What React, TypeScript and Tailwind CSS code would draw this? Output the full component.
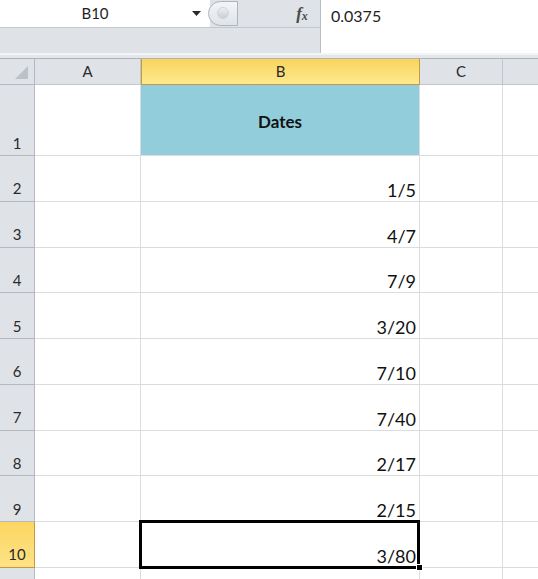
const rows = [
  { n: 2, v: '1/5' },
  { n: 3, v: '4/7' },
  { n: 4, v: '7/9' },
  { n: 5, v: '3/20' },
  { n: 6, v: '7/10' },
  { n: 7, v: '7/40' },
  { n: 8, v: '2/17' },
  { n: 9, v: '2/15' },
  { n: 10, v: '3/80' },
];

const grid = 'grid grid-cols-[35px_106px_279px_83px_1fr]';

function FormulaBar() {
  return (
    <div className="flex h-[53px] bg-[#dfe3e8]">
      <div className="flex w-[320px] flex-col">
        <div className="flex h-[28px] border-b border-[#c3c8ce]">
          <div className="relative flex w-[210px] items-center bg-white">
            <span className="w-[190px] text-center text-[15px] text-[#1e1e1e]">B10</span>
            <svg className="absolute left-[192px] top-[11px]" width="9" height="6" viewBox="0 0 9 6">
              <path d="M0 0h9L4.5 5z" fill="#2b2b2b" />
            </svg>
          </div>
          <div className="relative flex-1">
            <div className="absolute left-[-2px] top-[1px] h-[25px] w-[30px] rounded-l-full border border-[#aeb4bb] bg-gradient-to-b from-[#f4f5f7] to-[#dfe3e8]">
              <div className="ml-[8px] mt-[5px] h-[12px] w-[12px] rounded-full border border-[#d0d4d9] bg-gradient-to-b from-[#eef0f2] to-[#c9ced4]" />
            </div>
          </div>
          <div className="flex w-[40px] items-center justify-center pl-[4px] font-['Liberation_Serif',serif] text-[17px] font-bold italic text-[#4a4a4a]">
            f<span className="mt-[4px] text-[12px]">x</span>
          </div>
        </div>
        <div className="flex-1" />
      </div>
      <div className="flex-1 border-l border-[#b9bec5] bg-white pl-[10px] pt-[4px] text-[16px] text-[#1e1e1e]">
        0.0375
      </div>
    </div>
  );
}

export default function App() {
  return (
    <div className="h-[579px] w-[538px] overflow-hidden bg-white font-['Lato',sans-serif]">
      <FormulaBar />
      <div className="h-[6px] border-t-2 border-b border-t-[#f3f4f6] border-b-[#aeb3b9] bg-[#e3e6ea]" />
      <div className={`${grid} h-[26px] text-[15px] text-[#2a2a2a]`}>
        <div className="relative border-r border-b border-[#b5b9bf] bg-[#dfe3e8]">
          <svg className="absolute left-[15px] top-[7px]" width="13" height="13" viewBox="0 0 13 13">
            <path d="M13 0V13H0z" fill="#bcc1c7" />
          </svg>
        </div>
        <div className="flex items-center justify-center border-r border-b border-[#c2c6cc] bg-[#dfe3e8]">A</div>
        <div className="flex items-center justify-center border border-t-0 border-[#c39a45] bg-gradient-to-b from-[#f9d45d] to-[#fde98c]">B</div>
        <div className="flex items-center justify-center border-r border-b border-[#c2c6cc] bg-[#dfe3e8]">C</div>
        <div className="border-b border-[#c2c6cc] bg-[#dfe3e8]" />
      </div>
      <div className={`${grid} h-[71px]`}>
        <div className="flex items-end justify-center border-r border-b border-[#b5b9bf] bg-[#dfe3e8] pb-[1px] text-[15px] text-[#2a2a2a]">1</div>
        <div className="border-r border-b border-[#dadcdd]" />
        <div className="flex items-center justify-center border-b border-r border-[#dadcdd] bg-[#92cddc] pt-[4px] text-[17px] font-bold text-[#111]">Dates</div>
        <div className="border-r border-b border-[#dadcdd]" />
        <div className="border-b border-[#dadcdd]" />
      </div>
      {rows.map((r) => {
        const sel = r.n === 10;
        return (
          <div key={r.n} className={`${grid} h-[45.75px]`}>
            <div
              className={`flex items-end justify-center border-r border-b pb-[1px] text-[15px] text-[#2a2a2a] ${
                sel
                  ? 'border-[#c39a45] bg-gradient-to-b from-[#fbd661] to-[#fde286]'
                  : 'border-[#b5b9bf] bg-[#dfe3e8]'
              }`}
            >
              {r.n}
            </div>
            <div className="border-r border-b border-[#dadcdd]" />
            <div className="relative flex items-end justify-end border-r border-b border-[#dadcdd] pr-[3px] text-[18px] leading-[21px] text-[#111]">
              {r.v}
              {sel && (
                <>
                  <div className="absolute -left-[2px] -top-[2px] -right-[1px] -bottom-[2px] border-[3px] border-black" />
                  <div className="absolute -right-[4px] -bottom-[4px] h-[7px] w-[7px] border border-white bg-black" />
                </>
              )}
            </div>
            <div className="border-r border-b border-[#dadcdd]" />
            <div className="border-b border-[#dadcdd]" />
          </div>
        );
      })}
      <div className={`${grid} h-[30px]`}>
        <div className="border-r border-[#b5b9bf] bg-[#dfe3e8]" />
        <div className="border-r border-[#dadcdd]" />
        <div className="border-r border-[#dadcdd]" />
        <div className="border-r border-[#dadcdd]" />
        <div />
      </div>
    </div>
  );
}
